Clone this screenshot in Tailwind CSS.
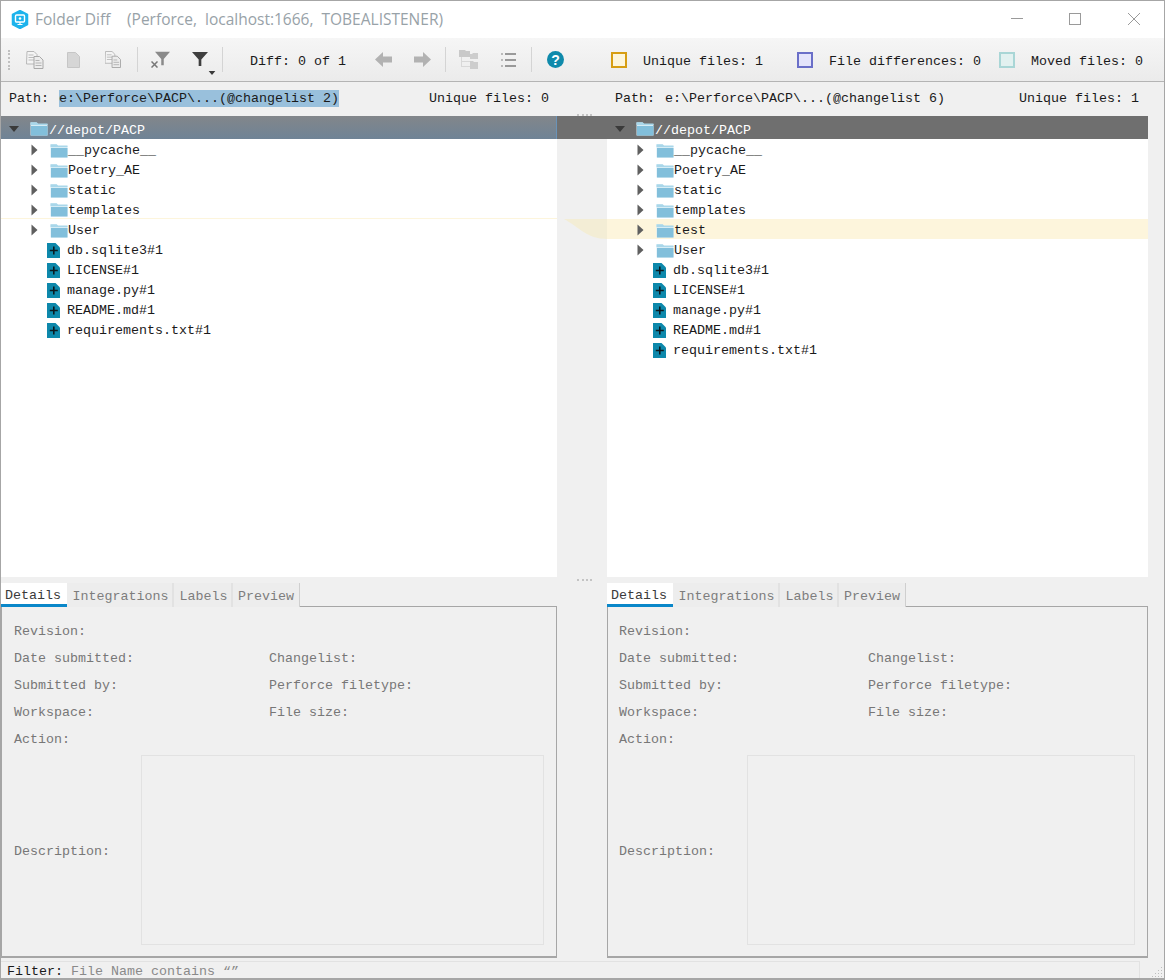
<!DOCTYPE html>
<html lang="en">
<head>
    <meta charset="UTF-8">
    <title>Folder Diff</title>
    <script src="https://cdn.jsdelivr.net/npm/@tailwindcss/browser@4"></script>
</head>
<body class="bg-[#f0f0f0] overflow-hidden">

<svg class="hidden">
    <symbol id="folder" viewBox="0 0 18 15">
        <path d="M0.5 14.5V1.5h6l1.5 1.5h9.5v11.5z" fill="#d5ecf5"/>
        <path d="M0.5 1.2h6.2l1.3 1.3h9.5v1.6H0.5z" fill="#a9d7ea"/>
        <path d="M1 5h16.5v9.5H1z" fill="#82bfdb"/>
    </symbol>
    <symbol id="file" viewBox="0 0 13 15">
        <path d="M0 0h8.5L13 4.5V15H0z" fill="#0d88ab"/>
        <path d="M6 3.5h1.6v3.2h3.2v1.6H7.6v3.2H6V8.3H2.8V6.7H6z" fill="#0b1a20"/>
    </symbol>
    <symbol id="arrow" viewBox="0 0 7 12">
        <path d="M0.5 0.5L6.5 6L0.5 11.5z" fill="#5f5f5f"/>
    </symbol>
    <symbol id="caret-down" viewBox="0 0 10 6">
        <path d="M0 0h10L5 6z" fill="#3a3a3a"/>
    </symbol>
    <symbol id="pages" viewBox="0 0 17 18">
        <path d="M0.5 0.5h7l3 3V13h-10.500z" fill="#f4f4f4" stroke="#b8b8b8"/>
        <path d="M2 4h5M2 6.500h6M2 9h6" stroke="#bcbcbc"/>
        <path d="M7.500 5.500h5.500l3.500 3.500V17.500H7.500z" fill="#ececec" stroke="#a8a8a8"/>
        <path d="M9 9.500h4M9 12h6M9 14.500h6" stroke="#b4b4b4"/>
    </symbol>
    <symbol id="filter" viewBox="0 0 18 16">
        <path d="M0 0h18L10.500 8.500V16h-3V8.500z"/>
    </symbol>
</svg>

<div class="relative w-[1165px] h-[980px] flex flex-col border-t-[1px] border-l-[1px] border-r-[1px] border-b-[2px] border-[#a6a6a6] font-['Liberation_Mono',monospace] text-[13.33px] text-[#1a1a1a] leading-none">

    <!-- title bar -->
    <div class="h-[37px] shrink-0 bg-white flex items-center font-['Open_Sans',sans-serif] text-[15.5px] text-[#98a2a8]">
        <svg class="ml-[10px] w-[18px] h-[19px]" viewBox="0 0 18 19">
            <path d="M9 0.500L16.500 4.500V14.500L9 18.500L1.500 14.500V4.500z" fill="#1db3ec" stroke="#1db3ec" stroke-width="1.500" stroke-linejoin="round"/>
            <rect x="4.500" y="5" width="9" height="7" rx="1" fill="none" stroke="#fff" stroke-width="1.400"/>
            <path d="M9 12v2.500M6.500 14.500h5" stroke="#fff" stroke-width="1.200"/>
            <circle cx="9" cy="8.500" r="1.300" fill="#fff"/>
        </svg>
        <span class="ml-[6px] w-[92px]">Folder Diff</span>
        <span class="whitespace-pre">(Perforce,  localhost:1666,  TOBEALISTENER)</span>
        <div class="ml-auto flex items-center mr-[24px] mb-[2px] gap-[46px]">
            <div class="w-[12px] h-[1px] bg-[#9a9a9a]"></div>
            <div class="w-[12px] h-[12px] border border-[#9a9a9a]"></div>
            <svg class="ml-[1px] w-[12px] h-[12px]" viewBox="0 0 12 12"><path d="M0 0L12 12M12 0L0 12" stroke="#9a9a9a"/></svg>
        </div>
    </div>

    <!-- toolbar -->
    <div class="h-[44px] shrink-0 flex items-center bg-gradient-to-b from-[#f6f6f6] to-[#ebebeb] border-b border-[#b4b4b4] whitespace-pre [&>span]:mt-[4px]">
        <div class="ml-[7px] w-[3px] h-[20px] border-l-2 border-dotted border-[#c0c0c0]"></div>
        <svg class="ml-[15px] w-[18px] h-[18px]"><use href="#pages"/></svg>
        <svg class="ml-[23px] w-[13px] h-[16px]" viewBox="0 0 13 16"><path d="M0.500 0.500h8l4 4v11h-12z" fill="#d6d6d6" stroke="#c6c6c6"/></svg>
        <svg class="ml-[25px] w-[16px] h-[17px]"><use href="#pages"/></svg>
        <div class="ml-[16px] w-[1px] h-[25px] bg-[#d4d4d4]"></div>
        <div class="ml-[13px] relative w-[19px] h-[17px] text-[#8a8a8a]">
            <svg class="absolute right-0 top-0 w-[15px] h-[15px] fill-current"><use href="#filter"/></svg>
            <svg class="absolute left-0 bottom-0 w-[7px] h-[7px]" viewBox="0 0 7 7"><path d="M0.500 0.500L6.500 6.500M6.500 0.500L0.500 6.500" stroke="#777" stroke-width="1.500"/></svg>
        </div>
        <div class="ml-[22px] mt-[7px] relative w-[24px] h-[24px] text-[#3f3f3f]">
            <svg class="absolute left-0 top-0 w-[16px] h-[16px] fill-current"><use href="#filter"/></svg>
            <svg class="absolute right-0 bottom-0 w-[8px] h-[4px]"><use href="#caret-down"/></svg>
        </div>
        <div class="ml-[6px] w-[1px] h-[25px] bg-[#d4d4d4]"></div>
        <span class="ml-[27px] w-[96px]">Diff: 0 of 1</span>
        <svg class="ml-[29px] w-[17px] h-[15px]" viewBox="0 0 17 15"><path d="M0 7.500L8 0v4.500h9v6H8V15z" fill="#b2b2b2"/></svg>
        <svg class="ml-[22px] w-[17px] h-[15px]" viewBox="0 0 17 15"><path d="M17 7.500L9 0v4.500H0v6h9V15z" fill="#b2b2b2"/></svg>
        <div class="ml-[14px] w-[1px] h-[25px] bg-[#d4d4d4]"></div>
        <svg class="ml-[13px] w-[19px] h-[19px]" viewBox="0 0 19 19"><path d="M0 0h6l1 1h4v6H0z" fill="#c9c9c9"/><path d="M11 4h2l1-1h5v6h-8z" fill="#cdcdcd"/><path d="M2 7h1v4h8v1H3v4h8v1H2z" fill="#d8d8d8"/><path d="M11 11h3l1 1h4v7h-8z" fill="#cdcdcd"/></svg>
        <svg class="ml-[23px] w-[15px] h-[14px]" viewBox="0 0 15 14"><path d="M0 1h2M0 7h2M0 13h2" stroke="#a8a8a8" stroke-width="1.600"/><path d="M4 1h11M4 7h11M4 13h11" stroke="#7d7d7d" stroke-width="1.600"/></svg>
        <div class="ml-[15px] w-[1px] h-[25px] bg-[#d4d4d4]"></div>
        <div class="ml-[15px] w-[17px] h-[17px] rounded-full bg-[#0f8aab] text-white font-['Liberation_Sans',sans-serif] font-bold text-[14px] flex items-center justify-center">?</div>
        <div class="ml-[47px] w-[16px] h-[16px] border-2 border-[#d79e13] bg-[#fdf6dc]"></div>
        <span class="ml-[16px] w-[120px]">Unique files: 1</span>
        <div class="ml-[34px] w-[16px] h-[16px] border-2 border-[#6a6fc8] bg-[#e4e4fb]"></div>
        <span class="ml-[16px] w-[153px]">File differences: 0</span>
        <div class="ml-[17px] w-[16px] h-[16px] border-2 border-[#a9d6d6] bg-[#e2f1f0]"></div>
        <span class="ml-[16px]">Moved files: 0</span>
    </div>

    <!-- panes -->
    <div class="flex flex-1 min-h-0">

        <!-- left pane -->
        <div class="w-[556px] shrink-0 flex flex-col">
            <div class="h-[34px] shrink-0 flex items-center justify-between pl-[8px] pr-[8px] whitespace-pre">
                <span>Path:<span class="ml-[10px] bg-[#99c0dc] py-[1px]">e:\Perforce\PACP\...(@changelist 2)</span></span>
                <span>Unique files: 0</span>
            </div>
            <div class="h-[461px] shrink-0 bg-white flex flex-col [&>div>span]:mt-[4px] [&>div>svg]:mt-[2px]">
                <div class="h-[23px] shrink-0 flex items-center bg-gradient-to-b from-[#82868a] to-[#6f8396] text-white border-r border-[#6a93b8]">
                    <svg class="ml-[8px] w-[10px] h-[6px]"><use href="#caret-down"/></svg>
                    <svg class="ml-[11px] w-[18px] h-[15px]"><use href="#folder"/></svg>
                    <span class="ml-px pt-[2px]">//depot/PACP</span>
                </div>
                <div class="h-[20px] flex items-center"><svg class="ml-[30px] w-[7px] h-[12px]"><use href="#arrow"/></svg><svg class="ml-[12px] w-[18px] h-[15px]"><use href="#folder"/></svg><span>__pycache__</span></div>
                <div class="h-[20px] flex items-center"><svg class="ml-[30px] w-[7px] h-[12px]"><use href="#arrow"/></svg><svg class="ml-[12px] w-[18px] h-[15px]"><use href="#folder"/></svg><span>Poetry_AE</span></div>
                <div class="h-[20px] flex items-center"><svg class="ml-[30px] w-[7px] h-[12px]"><use href="#arrow"/></svg><svg class="ml-[12px] w-[18px] h-[15px]"><use href="#folder"/></svg><span>static</span></div>
                <div class="h-[20px] flex items-center border-b border-[#fdf5dc]"><svg class="ml-[30px] w-[7px] h-[12px]"><use href="#arrow"/></svg><svg class="ml-[12px] w-[18px] h-[15px]"><use href="#folder"/></svg><span>templates</span></div>
                <div class="h-[20px] flex items-center"><svg class="ml-[30px] w-[7px] h-[12px]"><use href="#arrow"/></svg><svg class="ml-[12px] w-[18px] h-[15px]"><use href="#folder"/></svg><span>User</span></div>
                <div class="h-[20px] flex items-center"><svg class="ml-[46px] w-[13px] h-[15px]"><use href="#file"/></svg><span class="ml-[7px]">db.sqlite3#1</span></div>
                <div class="h-[20px] flex items-center"><svg class="ml-[46px] w-[13px] h-[15px]"><use href="#file"/></svg><span class="ml-[7px]">LICENSE#1</span></div>
                <div class="h-[20px] flex items-center"><svg class="ml-[46px] w-[13px] h-[15px]"><use href="#file"/></svg><span class="ml-[7px]">manage.py#1</span></div>
                <div class="h-[20px] flex items-center"><svg class="ml-[46px] w-[13px] h-[15px]"><use href="#file"/></svg><span class="ml-[7px]">README.md#1</span></div>
                <div class="h-[20px] flex items-center"><svg class="ml-[46px] w-[13px] h-[15px]"><use href="#file"/></svg><span class="ml-[7px]">requirements.txt#1</span></div>
            </div>
            <div class="h-[5px] shrink-0"></div>
            <div class="h-[25px] shrink-0 flex text-[#7d7d7d] pt-[1px]">
                <div class="w-[66px] bg-white border-b-[3px] border-[#0a87c9] text-[#3a3a3a] flex items-center justify-center pt-[5px] pr-[2px]">Details</div>
                <div class="w-[107px] bg-[#ededed] border-r-2 border-[#e2e2e2] flex items-center justify-center pt-[3px] pl-[2px]">Integrations</div>
                <div class="w-[59px] bg-[#ededed] border-r-2 border-[#e2e2e2] flex items-center justify-center pt-[3px] pl-[2px]">Labels</div>
                <div class="w-[67px] bg-[#ededed] border-r border-[#cfcfcf] flex items-center justify-center pt-[3px]">Preview</div>
                <div class="flex-1 border-b border-[#a6a6a6]"></div>
            </div>
            <div class="h-[351px] shrink-0 border-l border-r border-b-2 border-[#a6a6a6] pl-[12px] pr-[12px] pb-[11px] flex flex-col text-[#777]">
                <div class="grid grid-cols-[255px_1fr] auto-rows-[27px] items-center pt-[11px]">
                    <span>Revision:</span><span></span>
                    <span>Date submitted:</span><span>Changelist:</span>
                    <span>Submitted by:</span><span>Perforce filetype:</span>
                    <span>Workspace:</span><span>File size:</span>
                    <span>Action:</span><span></span>
                </div>
                <div class="flex-1 flex items-center mt-[2px]">
                    <span class="w-[127px] shrink-0 mt-[4px]">Description:</span>
                    <div class="flex-1 h-full border border-[#e2e2e2]"></div>
                </div>
            </div>
        </div>

        <!-- gutter -->
        <div class="w-[50px] shrink-0 relative">
            <div class="absolute left-[20px] top-[32px] w-[15px] border-t-2 border-dotted border-[#c4c4c4]"></div>
            <div class="absolute left-[20px] top-[497px] w-[15px] border-t-2 border-dotted border-[#c4c4c4]"></div>
            <div class="absolute left-0 top-[34px] w-full h-[23px] bg-[#6f6f6f]"></div>
            <svg class="absolute left-0 top-[136px] w-[50px] h-[21px]" viewBox="0 0 50 21"><path d="M7 1H50V21C30 21 22 9 7 1z" fill="#f3edd5"/></svg>
        </div>

        <!-- right pane -->
        <div class="w-[541px] shrink-0 flex flex-col">
            <div class="h-[34px] shrink-0 flex items-center justify-between pl-[8px] pr-[9px] whitespace-pre">
                <span>Path:<span class="ml-[10px]">e:\Perforce\PACP\...(@changelist 6)</span></span>
                <span>Unique files: 1</span>
            </div>
            <div class="h-[461px] shrink-0 bg-white flex flex-col [&>div>span]:mt-[4px] [&>div>svg]:mt-[2px]">
                <div class="h-[23px] shrink-0 flex items-center bg-[#6f6f6f] text-white">
                    <svg class="ml-[8px] w-[10px] h-[6px]"><use href="#caret-down"/></svg>
                    <svg class="ml-[11px] w-[18px] h-[15px]"><use href="#folder"/></svg>
                    <span class="ml-px pt-[2px]">//depot/PACP</span>
                </div>
                <div class="h-[20px] flex items-center"><svg class="ml-[30px] w-[7px] h-[12px]"><use href="#arrow"/></svg><svg class="ml-[12px] w-[18px] h-[15px]"><use href="#folder"/></svg><span>__pycache__</span></div>
                <div class="h-[20px] flex items-center"><svg class="ml-[30px] w-[7px] h-[12px]"><use href="#arrow"/></svg><svg class="ml-[12px] w-[18px] h-[15px]"><use href="#folder"/></svg><span>Poetry_AE</span></div>
                <div class="h-[20px] flex items-center"><svg class="ml-[30px] w-[7px] h-[12px]"><use href="#arrow"/></svg><svg class="ml-[12px] w-[18px] h-[15px]"><use href="#folder"/></svg><span>static</span></div>
                <div class="h-[20px] flex items-center"><svg class="ml-[30px] w-[7px] h-[12px]"><use href="#arrow"/></svg><svg class="ml-[12px] w-[18px] h-[15px]"><use href="#folder"/></svg><span>templates</span></div>
                <div class="h-[20px] flex items-center bg-[#fdf5dc]"><svg class="ml-[30px] w-[7px] h-[12px]"><use href="#arrow"/></svg><svg class="ml-[12px] w-[18px] h-[15px]"><use href="#folder"/></svg><span>test</span></div>
                <div class="h-[20px] flex items-center"><svg class="ml-[30px] w-[7px] h-[12px]"><use href="#arrow"/></svg><svg class="ml-[12px] w-[18px] h-[15px]"><use href="#folder"/></svg><span>User</span></div>
                <div class="h-[20px] flex items-center"><svg class="ml-[46px] w-[13px] h-[15px]"><use href="#file"/></svg><span class="ml-[7px]">db.sqlite3#1</span></div>
                <div class="h-[20px] flex items-center"><svg class="ml-[46px] w-[13px] h-[15px]"><use href="#file"/></svg><span class="ml-[7px]">LICENSE#1</span></div>
                <div class="h-[20px] flex items-center"><svg class="ml-[46px] w-[13px] h-[15px]"><use href="#file"/></svg><span class="ml-[7px]">manage.py#1</span></div>
                <div class="h-[20px] flex items-center"><svg class="ml-[46px] w-[13px] h-[15px]"><use href="#file"/></svg><span class="ml-[7px]">README.md#1</span></div>
                <div class="h-[20px] flex items-center"><svg class="ml-[46px] w-[13px] h-[15px]"><use href="#file"/></svg><span class="ml-[7px]">requirements.txt#1</span></div>
            </div>
            <div class="h-[5px] shrink-0"></div>
            <div class="h-[25px] shrink-0 flex text-[#7d7d7d] pt-[1px]">
                <div class="w-[66px] bg-white border-b-[3px] border-[#0a87c9] text-[#3a3a3a] flex items-center justify-center pt-[5px] pr-[2px]">Details</div>
                <div class="w-[107px] bg-[#ededed] border-r-2 border-[#e2e2e2] flex items-center justify-center pt-[3px] pl-[2px]">Integrations</div>
                <div class="w-[59px] bg-[#ededed] border-r-2 border-[#e2e2e2] flex items-center justify-center pt-[3px] pl-[2px]">Labels</div>
                <div class="w-[67px] bg-[#ededed] border-r border-[#cfcfcf] flex items-center justify-center pt-[3px]">Preview</div>
                <div class="flex-1 border-b border-[#a6a6a6]"></div>
            </div>
            <div class="h-[351px] shrink-0 border-l border-r border-b-2 border-[#a6a6a6] pl-[11px] pr-[12px] pb-[11px] flex flex-col text-[#777]">
                <div class="grid grid-cols-[249px_1fr] auto-rows-[27px] items-center pt-[11px]">
                    <span>Revision:</span><span></span>
                    <span>Date submitted:</span><span>Changelist:</span>
                    <span>Submitted by:</span><span>Perforce filetype:</span>
                    <span>Workspace:</span><span>File size:</span>
                    <span>Action:</span><span></span>
                </div>
                <div class="flex-1 flex items-center mt-[2px]">
                    <span class="w-[128px] shrink-0 mt-[4px]">Description:</span>
                    <div class="flex-1 h-full border border-[#e2e2e2]"></div>
                </div>
            </div>
        </div>
    </div>

    <!-- filter bar -->
    <div class="h-[17px] shrink-0 flex items-center pl-[6px] mr-[24px] border-t border-r border-[#e2e2e2] whitespace-pre [&>span]:mt-[4px]">
        <span>Filter: </span><span class="text-[#8a8a8a]">File Name contains “”</span>
    </div>

    <!-- resize grip -->
    <svg class="absolute right-[1px] bottom-0 w-[11px] h-[11px]" viewBox="0 0 11 11" fill="#bdbdbd">
        <rect x="9" y="0" width="1" height="1"/>
        <rect x="6" y="3" width="1" height="1"/><rect x="9" y="3" width="1" height="1"/>
        <rect x="3" y="6" width="1" height="1"/><rect x="6" y="6" width="1" height="1"/><rect x="9" y="6" width="1" height="1"/>
        <rect x="0" y="9" width="1" height="1"/><rect x="3" y="9" width="1" height="1"/><rect x="6" y="9" width="1" height="1"/><rect x="9" y="9" width="1" height="1"/>
    </svg>
</div>

</body>
</html>
